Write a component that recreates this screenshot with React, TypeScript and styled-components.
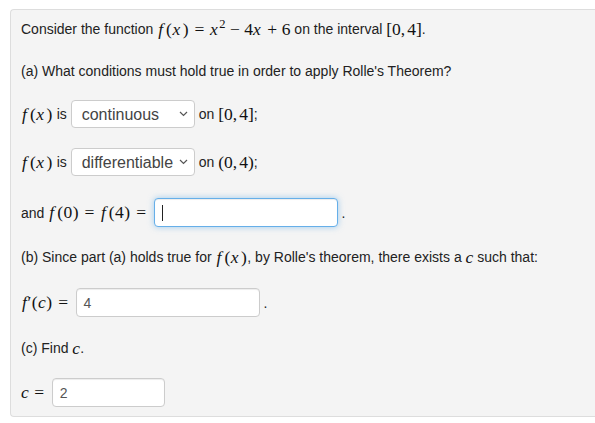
import React from "react";
import styled, { createGlobalStyle } from "styled-components";

const GlobalStyle = createGlobalStyle`
  html, body {
    margin: 0;
    padding: 0;
    overflow: hidden;
    background: #ffffff;
  }
  body {
    font-family: "Liberation Sans", Arial, sans-serif;
    font-size: 14px;
    color: #222222;
  }
`;

const Panel = styled.div`
  margin: 9px 0 0 10px;
  width: 600px;
  box-sizing: border-box;
  padding: 9px 10px 9px 10px;
  background: #f4f4f4;
  border: 1px solid #dddddd;
  border-right: none;
  border-radius: 4px 0 0 4px;
`;

const Row = styled.div<{ $top?: number; $height?: number }>`
  display: flex;
  align-items: center;
  height: ${(p) => p.$height ?? 20}px;
  margin-top: ${(p) => p.$top ?? 0}px;
  white-space: pre;
`;

const Math = styled.span`
  font-family: "Liberation Serif", "Times New Roman", serif;
  font-size: 17.5px;
  color: #111111;
`;

// italic variable; $l / $r widen the narrow Times glyphs towards the TeX ones
const V = styled.i<{ $l?: number; $r?: number }>`
  font-style: italic;
  padding: 0 ${(p) => p.$r ?? 0}px 0 ${(p) => p.$l ?? 0}px;
`;

const Paren = styled.span`
  padding: 0 0.5px;
`;

const Op = styled.span<{ $rel?: boolean }>`
  margin: 0 ${(p) => (p.$rel ? 5.5 : 4.5)}px;
`;

const Sup = styled.span`
  font-size: 12.5px;
  vertical-align: 7px;
  line-height: 0;
`;

const Gap = styled.span<{ $w: number }>`
  display: inline-block;
  width: ${(p) => p.$w}px;
`;

const SelectBox = styled.div`
  display: flex;
  align-items: center;
  width: 124px;
  height: 28px;
  box-sizing: border-box;
  margin: 0 4px 0 0;
  padding: 0 6px 0 10px;
  background: #ffffff;
  border: 1px solid #cccccc;
  border-radius: 4px;
`;

const Select = styled.select`
  flex: 1;
  appearance: none;
  border: none;
  background: transparent;
  padding: 0;
  font-family: "Liberation Sans", Arial, sans-serif;
  font-size: 16px;
  color: #444444;
  outline: none;
`;

const Input = styled.div<{ $w: number; $focus?: boolean }>`
  display: flex;
  align-items: center;
  width: ${(p) => p.$w}px;
  height: 29px;
  box-sizing: border-box;
  margin: 0 4px 0 2px;
  padding: 0 7px;
  background: #ffffff;
  border: 1px solid ${(p) => (p.$focus ? "#66afe9" : "#cccccc")};
  border-radius: 4px;
  box-shadow: ${(p) =>
    p.$focus
      ? "inset 0 1px 1px rgba(0,0,0,.075), 0 0 6px rgba(102,175,233,.6)"
      : "inset 0 1px 1px rgba(0,0,0,.075)"};
  font-size: 14px;
  color: #555555;
`;

const Caret = styled.span`
  display: inline-block;
  width: 1px;
  height: 16px;
  background: #222222;
`;

function Chevron() {
  return (
    <svg width="9" height="6" viewBox="0 0 9 6">
      <path d="M1 1l3.5 3.5L8 1" fill="none" stroke="#555" strokeWidth="1.2" />
    </svg>
  );
}

function F({ tight }: { tight?: boolean }) {
  return (
    <V $l={1} $r={tight ? 0.5 : 2.5}>
      f
    </V>
  );
}

function Fx({ arg = "x" }: { arg?: string }) {
  return (
    <>
      <F />
      <Paren>(</Paren>
      {/^\d$/.test(arg) ? arg : <V $r={2}>{arg}</V>}
      <Paren>)</Paren>
    </>
  );
}

function Interval({ open }: { open?: boolean }) {
  return (
    <Math>
      {open ? "(" : "["}0,<Gap $w={2} />4{open ? ")" : "]"}
    </Math>
  );
}

export default function App() {
  return (
    <>
      <GlobalStyle />
      <Panel>
        <Row>
          {"Consider the function "}
          <Math>
            <Fx />
            <Op $rel>=</Op>
            <V $r={1.5}>x</V>
            <Sup>2</Sup>
            <Op>−</Op>4<V $r={2}>x</V>
            <Op>+</Op>6
          </Math>
          {" on the interval "}
          <Interval />.
        </Row>
        <Row $top={22}>(a) What conditions must hold true in order to apply Rolle's Theorem?</Row>
        <Row $top={19} $height={28}>
          <Math>
            <Fx />
          </Math>
          {" is "}
          <SelectBox>
            <Select defaultValue="continuous">
              <option>continuous</option>
              <option>differentiable</option>
            </Select>
            <Chevron />
          </SelectBox>
          {"on "}
          <Interval />;
        </Row>
        <Row $top={20} $height={28}>
          <Math>
            <Fx />
          </Math>
          {" is "}
          <SelectBox>
            <Select defaultValue="differentiable">
              <option>continuous</option>
              <option>differentiable</option>
            </Select>
            <Chevron />
          </SelectBox>
          {"on "}
          <Interval open />;
        </Row>
        <Row $top={22} $height={29}>
          {"and "}
          <Math>
            <Fx arg="0" />
            <Op $rel>=</Op>
            <Fx arg="4" />
            <Op $rel>=</Op>
          </Math>
          <Input $w={184} $focus>
            <Caret />
          </Input>
          .
        </Row>
        <Row $top={20}>
          {"(b) Since part (a) holds true for "}
          <Math>
            <Fx />
          </Math>
          {", by Rolle's theorem, there exists a "}
          <Math>
            <V>c</V>
          </Math>
          {" such that:"}
        </Row>
        <Row $top={21} $height={29}>
          <Math>
            <F tight />′<Paren>(</Paren>
            <V>c</V>
            <Paren>)</Paren>
            <Op $rel>=</Op>
          </Math>
          <Input $w={184}>4</Input>.
        </Row>
        <Row $top={21}>
          {"(c) Find "}
          <Math>
            <V>c</V>
          </Math>
          .
        </Row>
        <Row $top={20} $height={29}>
          <Math>
            <V>c</V>
            <Op $rel>=</Op>
          </Math>
          <Input $w={113}>2</Input>
        </Row>
      </Panel>
    </>
  );
}
